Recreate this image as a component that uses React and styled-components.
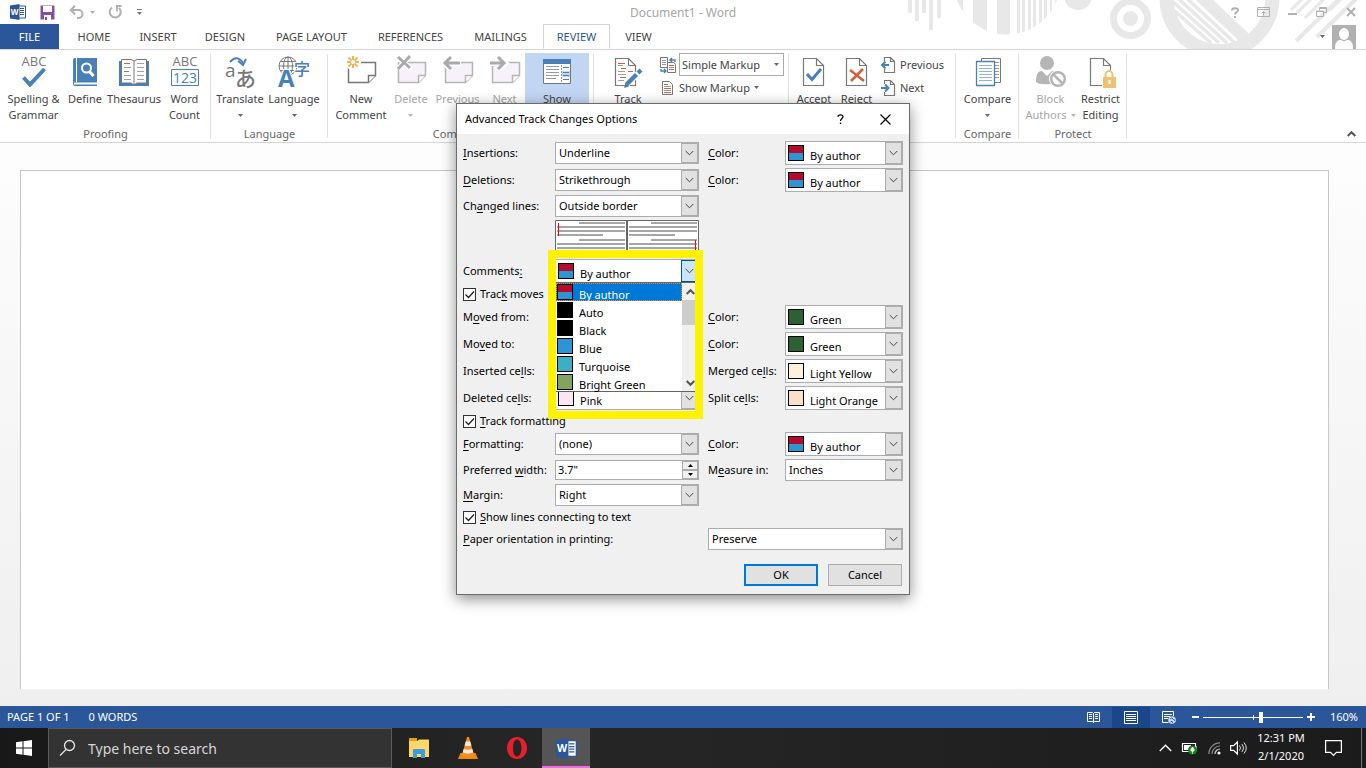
import React from 'react';
import styled, { createGlobalStyle, css } from 'styled-components';

const Global = createGlobalStyle`
  *, *::before, *::after { box-sizing: border-box; }
  body { margin: 0; font-family: "Noto Sans", "Open Sans", sans-serif; font-size: 11px; line-height: 16px; color: #444; }
  button, input, select { font: inherit; color: inherit; margin: 0; padding: 0; border: 0; background: none; border-radius: 0; }
  ul { list-style: none; margin: 0; padding: 0; }
  svg { display: block; flex: none; }
`;

const BLUE = '#4a80b8';
const GREY = '#777';

const Screen = styled.div`
  position: relative;
  min-height: 100vh;
  display: flex;
  flex-direction: column;
  background: #fff;
`;

/* ---------- title bar and tabs ---------- */

const Header = styled.header`
  position: relative;
  height: 50px;
  border-bottom: 1px solid #d4d4d4;
  display: flex;
  flex-direction: column;
`;
const Decor = styled.svg`
  position: absolute;
  right: 0;
  top: 0;
`;
const TitleBar = styled.div`
  position: relative;
  height: 25px;
  display: flex;
  align-items: center;
`;
const QuickAccess = styled.div`
  width: 154px;
  padding-left: 9px;
  display: flex;
  align-items: center;
`;
const IconButton = styled.button`
  width: ${p => p.$w}px;
  height: ${p => p.$h || 22}px;
  display: grid;
  place-items: center;
`;
const DocTitle = styled.h1`
  flex: 1;
  margin: 0;
  padding-top: 2px;
  text-align: center;
  font-size: 12px;
  font-weight: 400;
  color: #a6a6a6;
`;
const WindowButtons = styled.div`
  width: 154px;
  display: flex;
  justify-content: flex-end;
`;
const TabBar = styled.nav`
  position: relative;
  height: 25px;
  display: flex;
`;
const Tab = styled.a`
  width: ${p => p.$w}px;
  height: 25px;
  padding-top: 1px;
  line-height: 24px;
  text-align: center;
  text-decoration: none;
  color: ${p => (p.$active ? '#2b579a' : '#444')};
  ${p => p.$file && css`background: #2b579a; color: #fff; margin-right: 3px;`}
  ${p => p.$active && css`background: #fff; border: 1px solid #d4d4d4; border-bottom-color: #fff; padding-top: 0;`}
`;
const Account = styled.div`
  margin-left: auto;
  padding-right: 10px;
  display: flex;
  align-items: center;
`;

/* ---------- ribbon ---------- */

const Ribbon = styled.div`
  height: 93px;
  display: flex;
  border-bottom: 1px solid #d4d4d4;
`;
const Group = styled.section`
  position: relative;
  min-width: ${p => p.$w}px;
  padding: 3px ${p => p.$pad}px 0;
  display: flex;
  flex-direction: column;
  &::after {
    content: '';
    position: absolute;
    right: 0;
    top: 4px;
    bottom: 4px;
    width: 1px;
    background: #e1e1e1;
  }
`;
const GroupBody = styled.div`
  height: 73px;
  display: flex;
`;
const GroupName = styled.h2`
  margin: 0;
  font-size: 11px;
  font-weight: 400;
  line-height: 16px;
  text-align: center;
  color: #666;
`;
const Big = styled.button`
  width: ${p => p.$w}px;
  padding-top: 3px;
  display: flex;
  flex-direction: column;
  align-items: center;
  white-space: nowrap;
  color: ${p => (p.disabled ? '#a6a6a6' : '#444')};
  background: ${p => (p.$on ? '#c2d5f2' : 'none')};
`;
const BigLabel = styled.span`
  padding-top: 3px;
  display: flex;
  flex-direction: column;
  align-items: center;
`;
const Line = styled.span`
  height: 16px;
  display: flex;
  align-items: center;
  gap: 4px;
`;
const SmallColumn = styled.div`
  padding-left: ${p => p.$pad}px;
  display: flex;
  flex-direction: column;
`;
const SmallRow = styled.div`
  height: 23px;
  display: flex;
  align-items: center;
  gap: 3px;
`;
const SmallButton = styled.button`
  display: flex;
  align-items: center;
  gap: 4px;
`;
const MarkupBox = styled.span`
  position: relative;
  width: 105px;
  height: 23px;
  border: 1px solid #ababab;
  display: flex;
  align-items: center;
`;
const MarkupSelect = styled.select`
  appearance: none;
  width: 100%;
  height: 100%;
  padding-left: 2px;
`;
const MarkupCaret = styled.span`
  position: absolute;
  right: 4px;
  pointer-events: none;
`;
const Collapse = styled.div`
  margin-left: auto;
  padding: 0 8px 1px 0;
  display: flex;
  align-items: flex-end;
`;

/* ---------- document ---------- */

const Workspace = styled.main`
  flex: 1;
  min-height: 400px;
  display: flex;
  padding: 27px 37px 17px 20px;
  background: linear-gradient(#fdfdfd, #efefef);
`;
const Page = styled.div`
  flex: 1;
  background: #fff;
  border: 1px solid #c6c6c6;
  border-bottom: 0;
`;

/* ---------- status bar ---------- */

const StatusBar = styled.footer`
  height: 22px;
  padding: 0 8px 0 7px;
  display: flex;
  align-items: center;
  background: #2b579a;
  color: #fff;
`;
const StatusText = styled.span`
  margin-right: 19px;
`;
const StatusRight = styled.div`
  margin-left: auto;
  display: flex;
  align-items: center;
`;
const ViewButton = styled.button`
  width: 38px;
  height: 21px;
  display: grid;
  place-items: center;
  background: ${p => (p.$on ? '#19478a' : 'none')};
`;
const ZoomSlider = styled.input`
  appearance: none;
  width: 100px;
  height: 11px;
  background:
    linear-gradient(#fff, #fff) center / 1px 5px no-repeat,
    linear-gradient(#fff, #fff) center / 100% 1px no-repeat;
  &::-webkit-slider-thumb { appearance: none; width: 4px; height: 11px; background: #fff; }
`;
const ZoomLevel = styled.span`
  width: 40px;
  text-align: right;
`;

/* ---------- taskbar ---------- */

const Taskbar = styled.footer`
  height: 40px;
  display: flex;
  align-items: stretch;
  background: linear-gradient(90deg, #181818, #262626 40%, #232323 60%, #1b1b1b);
  color: #fff;
`;
const TaskButton = styled.button`
  width: ${p => p.$w}px;
  display: grid;
  place-items: center;
  ${p => p.$on && css`background: #555; border-bottom: 2px solid #f06be0; padding-top: 2px;`}
`;
const Search = styled.label`
  width: 344px;
  margin-right: 2px;
  padding-left: 10px;
  display: flex;
  align-items: center;
  gap: 12px;
  background: #333;
  border: 1px solid #5a5a5a;
`;
const SearchInput = styled.input`
  flex: 1;
  min-width: 0;
  outline: 0;
  padding-top: 1px;
  font-size: 14px;
  &::placeholder { color: #d6d6d6; opacity: 1; }
`;
const Apps = styled.div`
  display: flex;
`;
const Tray = styled.div`
  margin-left: auto;
  display: flex;
`;
const Clock = styled.time`
  width: 62px;
  padding-top: 1px;
  line-height: 18px;
  text-align: center;
`;
const ShowDesktop = styled.div`
  width: 5px;
  border-left: 1px solid #777;
`;

/* ---------- dialog ---------- */

const Overlay = styled.div`
  position: absolute;
  inset: 0;
  padding-top: 103px;
  display: flex;
  justify-content: center;
  align-items: flex-start;
`;
const Dialog = styled.section`
  width: 454px;
  background: #f0f0f0;
  border: 1px solid #6b6b6b;
  box-shadow: 0 4px 14px rgba(0, 0, 0, 0.45);
  color: #000;
`;
const DialogTitle = styled.div`
  height: 30px;
  padding: 0 1px 0 8px;
  display: flex;
  align-items: center;
  background: #fff;
`;
const DialogName = styled.h2`
  flex: 1;
  margin: 0;
  font-size: 11px;
  font-weight: 400;
`;
const Form = styled.form`
  padding: 6px 6px 8px;
  display: flex;
  flex-direction: column;
  gap: 1px;
`;
const Row = styled.div`
  min-height: ${p => p.$h || 26}px;
  display: grid;
  grid-template-columns: ${p => (p.$wide ? '245px 1fr' : '92px 144px 86px 118px')};
  align-items: center;
`;
const Label = styled.label`
  padding-left: ${p => (p.$second ? 9 : 0)}px;
  white-space: nowrap;
  u { text-underline-offset: 2px; }
`;
const Combo = styled.div`
  position: relative;
  height: ${p => (p.$swatch ? 24 : 22)}px;
  border: 1px solid #ababb0;
  background: #fff;
`;
const Select = styled.select`
  appearance: none;
  display: block;
  width: 100%;
  height: 100%;
  outline: 0;
  padding-left: ${p => (p.$swatch ? 24 : 3)}px;
  padding-top: ${p => (p.$swatch ? 5 : 0)}px;
`;
const Arrow = styled.span`
  position: absolute;
  top: 0;
  right: 0;
  bottom: 0;
  width: 17px;
  display: grid;
  place-items: center;
  pointer-events: none;
  background: ${p => (p.$on ? '#cce4f7' : '#e1e1e1')};
  border: 1px solid ${p => (p.$on ? '#005499' : '#adadad')};
`;
const Swatch = styled.span`
  flex: none;
  width: 16px;
  height: 16px;
  border: 1px solid #000;
  background: ${p => p.$fill};
`;
const ComboSwatch = styled(Swatch)`
  position: absolute;
  left: 2px;
  top: 3px;
  pointer-events: none;
`;
const Anchor = styled.div`
  position: relative;
`;
const Popup = styled.div`
  position: absolute;
  z-index: 2;
  top: 23px;
  left: 0;
  width: 145px;
  display: flex;
  background: #fff;
  border: 1px solid #646464;
`;
const List = styled.ul`
  flex: 1;
`;
const Item = styled.li`
  height: 18px;
  padding-left: 1px;
  display: flex;
  align-items: center;
  gap: 6px;
  ${p => p.$on && css`background: #0078d7; color: #fff; outline: 1px dotted #ff8728; outline-offset: -1px;`}
`;
const ItemText = styled.span`
  padding-top: 6px;
`;
const Scroll = styled.div`
  width: 17px;
  display: flex;
  flex-direction: column;
  background: #f0f0f0;
`;
const ScrollButton = styled.button`
  height: 17px;
  display: grid;
  place-items: center;
`;
const Track = styled.div`
  flex: 1;
`;
const Thumb = styled.div`
  height: 25px;
  background: #cdcdcd;
`;
const Highlight = styled.div`
  position: absolute;
  z-index: 3;
  left: -7px;
  top: -9px;
  width: 155px;
  height: 169px;
  border: 8px solid #fff200;
  pointer-events: none;
`;
const CheckRow = styled.div`
  height: 18px;
  display: flex;
  align-items: center;
  gap: 4px;
`;
const CheckMark = styled.span`
  display: grid;
  > * { grid-area: 1 / 1; }
  > svg { pointer-events: none; }
`;
const Check = styled.input`
  appearance: none;
  width: 13px;
  height: 13px;
  border: 1px solid #333;
  background: #fff;
`;
const Spinner = styled.div`
  height: 20px;
  display: flex;
  background: #fff;
  border: 1px solid #ababb0;
`;
const SpinInput = styled.input`
  flex: 1;
  min-width: 0;
  padding-left: 2px;
  outline: 0;
`;
const SpinButtons = styled.div`
  width: 16px;
  display: flex;
  flex-direction: column;
`;
const SpinButton = styled.button`
  flex: 1;
  display: grid;
  place-items: center;
  background: #f0f0f0;
  border: 1px solid #ababab;
`;
const Actions = styled.div`
  padding: 12px 1px 0 0;
  display: flex;
  justify-content: flex-end;
  gap: 10px;
`;
const PushButton = styled.button`
  width: 74px;
  height: 22px;
  background: #e1e1e1;
  border: ${p => (p.$primary ? '2px solid #0078d7' : '1px solid #adadad')};
`;

/* ---------- drawings ---------- */

const Svg = ({ w = 32, h = 32, children }) => (
  <svg width={w} height={h} viewBox={`0 0 ${w} ${h}`} fill="none" overflow="visible" aria-hidden="true">{children}</svg>
);
const Caret = ({ c = '#666' }) => <Svg w={5} h={3}><path d="M0 0h5L2.500 3z" fill={c} /></Svg>;
const Chevron = ({ up, bold }) => (
  <Svg w={9} h={6}>
    <path d={up ? 'M.7 5 4.500 1.200 8.300 5' : 'M.7 1 4.500 4.800 8.300 1'} stroke={bold ? '#555' : '#444'} strokeWidth={bold ? 2 : 1} />
  </Svg>
);

const WordLogo = ({ s }) => (
  <svg width={s} height={s} viewBox="0 0 16 16" aria-hidden="true">
    <path d="M8 2h7.500v12H8z" fill="#fff" stroke="#2b579a" />
    <path d="M10 4.500h4M10 6.500h4M10 8.500h4M10 10.500h4" stroke="#2b579a" />
    <path d="M0 1.500 9.500 0v16L0 14.500z" fill="#2b579a" />
    <text x="4.700" y="11" textAnchor="middle" fontSize="8" fontWeight="700" fontFamily="Open Sans" fill="#fff">W</text>
  </svg>
);
const SaveIcon = () => (
  <Svg w={15} h={15}>
    <path d="M.5.5h14v14H.5z" fill="#8250a4" />
    <path d="M3 1h9v6H3z" fill="#fff" /><path d="M4 10h7v5H4z" fill="#fff" /><path d="M5 12h2v3H5z" fill="#8250a4" />
  </Svg>
);
const UndoIcon = () => (
  <Svg w={16} h={14}>
    <path d="M2 5h7.500a4 4 0 0 1 0 8H8" stroke="#b0b0b0" strokeWidth="2" /><path d="M6 .8 1.800 5 6 9.200" stroke="#b0b0b0" strokeWidth="2" />
  </Svg>
);
const RedoIcon = () => (
  <Svg w={15} h={15}>
    <path d="M4 2.500A5.500 5.500 0 1 0 11 3" stroke="#b0b0b0" strokeWidth="2" /><path d="M8 1h5.500M9 1v5.500" stroke="#b0b0b0" strokeWidth="1.800" />
  </Svg>
);
const CustomizeIcon = () => <Svg w={5} h={7}><path d="M0 .5h5" stroke="#777" /><path d="M0 3h5L2.500 6z" fill="#777" /></Svg>;

const HeaderArt = () => (
  <Decor width="466" height="49" viewBox="0 0 466 49" aria-hidden="true">
    <defs>
      <clipPath id="disc"><circle cx="107" cy="-19" r="53.500" /></clipPath>
      <clipPath id="ringHole"><circle cx="319.500" cy="-2" r="47" /></clipPath>
    </defs>
    <g fill="#e8e8e8">
      <path d="M8 0h4v13H8zM15 0h4v21h-4zM22 0h4v13h-4zM29 0h4v30h-4zM37 0h4v18h-4z" />
      <path clipPath="url(#disc)" d="M52 0h11v36H52zM73 0h14v36H73zM97 0h13v36H97zM117 0h3v36h-3zM122 0h3v36h-3zM128 0h3v36h-3zM133 0h3v36h-3zM139 0h3v36h-3zM144 0h3v36h-3zM150 0h2v36h-2zM155 0h2v36h-2z" />
      <circle cx="178" cy="-4" r="14" />
      <circle cx="230.500" cy="18.500" r="7.500" />
    </g>
    <g stroke="#e8e8e8" fill="none">
      <circle cx="230.500" cy="18.500" r="17" strokeWidth="7" />
      <circle cx="319.500" cy="-2" r="53" strokeWidth="14" />
      <g clipPath="url(#ringHole)">
        <path d="M296-8 350 43" strokeWidth="12" />
        <path d="M280-8 335 43M271-8 327 43M262-8 319 43M253-8 311 43" strokeWidth="3.500" />
      </g>
      <path d="M396 41 441-3M417 37 458-3" strokeWidth="4" />
      <path d="M405 18 426-3M391 10 404-3M397 13 413-3M430 10 443-3" strokeWidth="3" />
    </g>
  </Decor>
);
const HelpIcon = () => (
  <Svg w={8} h={11}><path d="M1 3.500C1 .5 7 .5 7 3.200 7 5 4 5 4 7.500M4 9v2" stroke="#b0b0b0" strokeWidth="2" /></Svg>
);
const RibbonDisplayIcon = () => (
  <Svg w={13} h={10}><path d="M.5.5h12v9H.5zM.5 2.500h12M6.500 8.500v-4M4.500 6.500l2-2 2 2" stroke="#b0b0b0" /></Svg>
);
const MinIcon = () => <Svg w={9} h={10}><path d="M0 7h9" stroke="#b0b0b0" strokeWidth="2" /></Svg>;
const RestoreIcon = () => <Svg w={11} h={10}><path d="M3.500 3V.5h7v5H8M.5 4h7v5.500h-7zM.5 4.500h7M3.500 1.500h7" stroke="#b0b0b0" /></Svg>;
const CloseIcon = () => <Svg w={10} h={10}><path d="m1 1 8 8M9 1 1 9" stroke="#b0b0b0" strokeWidth="2" /></Svg>;
const Avatar = () => (
  <Svg w={24} h={24}>
    <path d="M0 0h24v24H0z" fill="#b1b1b1" /><ellipse cx="12" cy="9" rx="5" ry="6" fill="#fff" />
    <path d="M3 24c0-7 2-9 6-9l3 1.500L15 15c4 0 6 2 6 9z" fill="#fff" />
  </Svg>
);

const Abc = () => <text x="16" y="10" textAnchor="middle" fontSize="13" fontFamily="Open Sans" fontWeight="500" fill={GREY}>ABC</text>;
const SpellingIcon = () => <Svg><Abc /><path d="m5.500 21.500 6.500 7L26.500 13" stroke={BLUE} strokeWidth="4" /></Svg>;
const DefineIcon = () => (
  <Svg>
    <path d="M4 4q0-2 2-2h22v28H6q-2 0-2-2z" fill={BLUE} /><path d="M7.500 2v24" stroke="#fff" /><path d="M5 26.500h23v2H5z" fill="#fff" />
    <circle cx="17.500" cy="12" r="4.500" stroke="#fff" strokeWidth="2" /><path d="m20.500 15.500 4 4.500" stroke="#fff" strokeWidth="3" />
  </Svg>
);
const ThesaurusIcon = () => (
  <Svg>
    <path d="M1 5h30v25H1z" fill={BLUE} />
    <path d="M3.500 3.500H13l3 1.500 3-1.500h9.500v23.500H19l-3 2-3-2H3.500z" fill="#fff" stroke={GREY} /><path d="M16 5v24" stroke={GREY} />
    <path d="M6 7.500h6M6 15.500h5" stroke="#d2603c" />
    <path d="M6 11.500h7M6 19.500h7M6 23.500h7M19 7.500h7M19 11.500h7M19 15.500h7M19 19.500h7M19 23.500h7" stroke="#a0a0a0" />
  </Svg>
);
const WordCountIcon = () => (
  <Svg>
    <Abc /><path d="M2.500 13.500h27v16h-27z" stroke={BLUE} />
    <text x="16" y="27" textAnchor="middle" fontSize="14" fontFamily="Open Sans" fill={BLUE}>123</text>
  </Svg>
);
const TranslateIcon = () => (
  <Svg>
    <text x="1" y="21" fontSize="19" fontFamily="Open Sans" fill={GREY}>a</text>
    <text x="11" y="30" fontSize="21" fontFamily="Noto Sans CJK JP" fontWeight="500" fill={GREY}>あ</text>
    <path d="M6 6Q13-2 19 7" stroke={BLUE} strokeWidth="2" /><path d="m14 5 5 4 3-6" stroke={BLUE} strokeWidth="2" />
  </Svg>
);
const LanguageIcon = () => (
  <Svg>
    <circle cx="10" cy="10" r="9" stroke={GREY} /><ellipse cx="10" cy="10" rx="4.500" ry="9" stroke={GREY} /><path d="M10 1v18M1 10h18M2.500 5.500h15M2.500 14.500h15" stroke={GREY} />
    <text x="0" y="31" fontSize="24" fontFamily="Open Sans" fontWeight="700" fill={BLUE} stroke="#fff" strokeWidth="2" paintOrder="stroke">A</text>
    <text x="16" y="19" fontSize="16" fontFamily="Noto Sans CJK JP" fontWeight="500" fill={BLUE} stroke="#fff" strokeWidth="2" paintOrder="stroke">字</text>
  </Svg>
);
const Note = ({ off }) => (
  <>
    <path d="M3.500 6.500h27v13l-7 7h-20z" fill={off ? '#f7f2f9' : '#fff'} stroke={off ? '#b5b5b5' : GREY} strokeWidth="1.500" />
    <path d="M23.500 26.500v-7h7" fill="#fff" stroke={off ? '#b5b5b5' : GREY} strokeWidth="1.500" />
  </>
);
const NewCommentIcon = () => (
  <Svg>
    <Note /><circle cx="8" cy="6" r="8" fill="#fff" />
    <path d="M8 0v12M2 6h12M3.500 1.500l9 9M12.500 1.500l-9 9" stroke="#ecb75c" strokeWidth="2" /><circle cx="8" cy="6" r="2" fill="#fff" />
  </Svg>
);
const DeleteIcon = () => <Svg><Note off /><path d="m2 1 14 12M15 0 3 13" stroke="#fff" strokeWidth="5" /><path d="m3 1 12 11M15 0 3 13" stroke="#aaa" strokeWidth="3" /></Svg>;
const PrevIcon = () => <Svg><Note off /><path d="M3 7h16M9 0 2.500 7 9 13" stroke="#fff" strokeWidth="6" /><path d="M4 7h14M9 1 3 7l6 6" stroke="#aaa" strokeWidth="3" /></Svg>;
const NextIcon = () => <Svg><Note off /><path d="M0 7h17M10 0l6.500 7L10 13" stroke="#fff" strokeWidth="6" /><path d="M1 7h14M9 1l6 6-6 6" stroke="#aaa" strokeWidth="3" /></Svg>;
const ShowIcon = () => (
  <Svg>
    <path d="M2.500 3.500h27v24h-27z" fill="#fff" stroke={GREY} /><path d="M2 3h28v5H2z" fill={BLUE} /><path d="M21 15h8v6h-8z" fill="#c2d5f2" />
    <path d="M5 10.500h13M5 13.500h13M5 16.500h13M5 19.500h13M5 22.500h10" stroke="#999" /><path d="M20.500 9v18" stroke="#999" strokeDasharray="2 1" />
    <path d="M22 11.500h6M22 16.500h6M22 19.500h6M22 23.500h6" stroke={BLUE} />
  </Svg>
);
const Sheet = () => <path d="M5.500 2.500h13l7 7v20h-20zM18.500 2.500v7h7" fill="#fff" stroke={GREY} strokeWidth="1.200" />;
const TrackIcon = () => (
  <Svg>
    <path d="M3.500 2.500h13l7 7v20h-20zM16.500 2.500v7h7" fill="#fff" stroke={GREY} strokeWidth="1.200" />
    <path d="M6 9.500h5M6 15.500h7M6 18.500h8M6 24.500h6" stroke="#a0a0a0" /><path d="M6 7.500h7M9 12.500h5M16 15.500h5M8 21.500h6" stroke="#d2603c" />
    <path d="M29 15 15 28" stroke="#fff" strokeWidth="6" /><path d="m24.500 18.500-10 10" stroke={BLUE} strokeWidth="4.500" />
    <path d="m26 17 3-3" stroke={BLUE} strokeWidth="4" /><path d="m12 32 1.500-5 3.500 3.500z" fill={BLUE} />
  </Svg>
);
const AcceptIcon = () => <Svg><Sheet /><path d="m9 18 5 5.500L23 13" stroke={BLUE} strokeWidth="3" /></Svg>;
const RejectIcon = () => <Svg><Sheet /><path d="m9 14 14 11M22 13 10 25" stroke="#d2603c" strokeWidth="2.500" /></Svg>;
const CompareIcon = () => (
  <Svg>
    <path d="M9.500 2.500h19v24h-19z" fill="#fff" stroke={GREY} /><path d="M23 6.500h4M23 9.500h4M23 12.500h4M23 15.500h4M23 18.500h4M23 21.500h4" stroke="#999" />
    <path d="M4.500 5.500h18v24h-18z" fill="#fff" stroke={BLUE} strokeWidth="1.300" /><path d="M7 9.500h13M7 12.500h13M7 15.500h13M7 18.500h13M7 21.500h13M7 24.500h13" stroke="#8fb4d8" />
  </Svg>
);
const BlockIcon = () => (
  <Svg>
    <circle cx="12" cy="7" r="7" fill="#b5b5b5" /><path d="M1 26c0-8 2-11 6-11l5 5 5-5q4 0 5 4l-6 9q-12 1-15-2z" fill="#b5b5b5" />
    <circle cx="23" cy="23" r="9" fill="#fff" /><circle cx="23" cy="23" r="6.800" stroke="#b5b5b5" strokeWidth="2.500" /><path d="m18 18 10 10" stroke="#b5b5b5" strokeWidth="2.500" />
  </Svg>
);
const RestrictIcon = () => (
  <Svg>
    <Sheet /><path d="M17 14h15v18H17z" fill="#fff" />
    <path d="M20.500 22v-3a3.500 4 0 0 1 7 0v3" stroke="#ecc173" strokeWidth="2" /><path d="M18 21h13v11H18z" fill="#ecc173" /><path d="M24.500 24v4" stroke="#fff" strokeWidth="2" />
  </Svg>
);
const MarkupIcon = () => (
  <Svg w={16} h={16}>
    <path d="M.5.5h7v10h-7zM7.500 5.500H14l1.500 2v8h-8z" fill="#fff" stroke={GREY} /><path d="M2 3.500h4M2 5.500h4M2 7.500h4" stroke="#999" />
    <path d="M9 8.500h5M9 12.500h5" stroke="#d2603c" /><path d="M9 10.500h5" stroke="#999" />
    <path d="M15 5V3h-5M12 1l-2 2 2 2M1 12v2h5M4 12l2 2-2 2" stroke={BLUE} strokeWidth="1.400" />
  </Svg>
);
const ShowMarkupIcon = () => (
  <Svg w={16} h={16}>
    <path d="M2.500 1.500h7l3 3v10h-10z" fill="#fff" stroke={GREY} /><path d="M4 4.500h4M4 8.500h7M4 12.500h7" stroke="#d2603c" /><path d="M4 6.500h7M4 10.500h7" stroke="#999" />
  </Svg>
);
const PaneIcon = () => <Svg w={16} h={16}><path d="M0 0h16v3H0z" fill="#2b579a" /><path d="M.5.5h15v15H.5z" stroke={GREY} /></Svg>;
const StepIcon = ({ next }) => (
  <Svg w={16} h={16}>
    <path d="M3.500 4V.5h6l4 4v11h-10V12M9.500.5v4h4" stroke={GREY} strokeWidth="1.200" />
    <path d={next ? 'M0 8h7M4 4.500 7.500 8 4 11.500' : 'M8 8H1M4.500 4.500 1 8l3.500 3.500'} stroke={BLUE} strokeWidth="2" />
  </Svg>
);

const ReadIcon = () => (
  <Svg w={13} h={12}>
    <path d="M.5 1.500h5l1 1 1-1h5v9h-5l-1 1-1-1h-5zM6.500 2v10M2 3.500h3M2 5.500h3M2 7.500h3M8 3.500h3M8 5.500h3M8 7.500h3" stroke="#fff" />
  </Svg>
);
const PrintIcon = () => <Svg w={14} h={13}><path d="M.5.5h13v12H.5zM2 3.500h10M2 5.500h10M2 7.500h10M2 9.500h10" stroke="#fff" /></Svg>;
const WebIcon = () => (
  <Svg w={14} h={13}>
    <path d="M11.500 5V.5H.5v11h6M2 3.500h8M2 5.500h6M2 7.500h4" stroke="#fff" /><circle cx="10" cy="9" r="3.800" fill="#cfdcf0" /><path d="M8 8q2-2 3 0t2 1M8.500 11q2-2 2 1" stroke="#2b579a" />
  </Svg>
);
const MinusIcon = () => <Svg w={7} h={8}><path d="M0 4h7" stroke="#fff" strokeWidth="2" /></Svg>;
const PlusIcon = () => <Svg w={8} h={8}><path d="M0 4h8M4 0v8" stroke="#fff" strokeWidth="2" /></Svg>;

const StartIcon = () => <Svg w={16} h={16}><path d="M0 2.300 6.500 1.300V7.500H0zM7.500 1.200 16 0v7.500H7.500zM0 8.500h6.500v6.200L0 13.700zM7.500 8.500H16V16l-8.500-1.200z" fill="#fff" /></Svg>;
const SearchIcon = () => <Svg w={17} h={18}><circle cx="10.500" cy="6.500" r="5" stroke="#e6e6e6" strokeWidth="1.300" /><path d="M7 10.500 1 16.500" stroke="#e6e6e6" strokeWidth="1.300" /></Svg>;
const FolderIcon = () => (
  <Svg w={22} h={20}>
    <path d="M1 0h8v4H1z" fill="#e0a21b" /><path d="M1 3h8l2-1.500h10V19H1z" fill="#fcd668" /><path d="M5 20v-8q0-1 1-1h10q1 0 1 1v8h-4v-4H9v4z" fill="#3a9be0" />
  </Svg>
);
const VlcIcon = () => (
  <Svg w={20} h={24}>
    <path d="M2.500 17h15L20 23H0z" fill="#f08a0c" /><path d="M9 1h2l5 18q-6 3-12 0z" fill="#f39019" />
    <path d="m7.800 5.500-1.200 4q3.400 1 6.800 0l-1.200-4zM5.700 13l-1 3.500q5.300 2 10.600 0l-1-3.500q-4.300 1.500-8.600 0z" fill="#e9e9e9" />
  </Svg>
);
const OperaIcon = () => <Svg w={22} h={24}><path fillRule="evenodd" d="M11 1c6 0 10 5 10 11s-4 11-10 11S1 18 1 12 5 1 11 1zm0 2.500C8 3.500 7 8 7 12s1 8.500 4 8.500 4.500-4.500 4.500-8.500S14 3.500 11 3.500z" fill="#e8202e" /></Svg>;
const BatteryIcon = () => (
  <Svg w={16} h={14}>
    <path d="M.5 2.500h13v8H.5zM14 5v3" stroke="#fff" strokeWidth="1.200" /><path d="M2 4h7v5H2z" fill="#fff" />
    <circle cx="10.500" cy="9" r="4.500" fill="#13881b" /><path d="M10.500 6 8.500 9l2 2 2-2zM10.500 9v4" fill="#fff" stroke="#fff" strokeWidth=".6" />
  </Svg>
);
const WifiIcon = () => (
  <Svg w={13} h={13}>
    <path d="M.8 12A11.200 11.200 0 0 1 12 .8M4 12a8 8 0 0 1 8-8" stroke="#8a8a8a" strokeWidth="1.200" /><path d="M7 12a5 5 0 0 1 5-5" stroke="#ccc" strokeWidth="1.200" /><circle cx="11" cy="11" r="1.600" fill="#fff" />
  </Svg>
);
const SpeakerIcon = () => (
  <Svg w={17} h={14}>
    <path d="M.6 4.600h3L7.400 1v12L3.600 9.400h-3z" stroke="#fff" strokeWidth="1.200" /><path d="M9.500 4.500q2 2.500 0 5M11.800 3q3.200 4 0 8M14 1.500q4.500 5.500 0 11" stroke="#e0e0e0" />
  </Svg>
);
const NoticeIcon = () => <Svg w={17} h={17}><path d="M.6.6h15.800v11.800h-5L8.500 15.500l-3-3.100H.6z" stroke="#fff" strokeWidth="1.200" /></Svg>;

const PREVIEW = [[24, 70], [2, 70], [2, 70], [2, 48], [24, 70], [2, 70], [2, 70], [2, 48]];
const PREVIEW_Y = [3, 7, 11, 15, 20, 24, 28, 32];
const PreviewArt = () => (
  <Svg w={144} h={37}>
    <path d="M.5.5h143v36H.5z" fill="#fff" stroke="#666" />
    <path d="M72 0v37" stroke="#666" strokeWidth="2" />
    {[0, 72].map(dx => PREVIEW.map(([a, b], i) => (
      <path key={`${dx}-${i}`} d={`M${a + dx} ${PREVIEW_Y[i]}H${b + dx}`} stroke="#a6a6a6" strokeWidth="2" />
    )))}
    <path d="M3.500 3v13M140.500 20v14" stroke="#f00" />
  </Svg>
);

/* ---------- composed parts ---------- */

const AUTHOR = 'linear-gradient(#b30b2f 50%, #2e95d3 50%)';

const BigButton = ({ w, icon, lines, caret, off, on }) => (
  <Big $w={w} $on={on} disabled={off} type="button">
    {icon}
    <BigLabel>
      {lines.map((t, i) => <Line key={t}>{t}{caret && i === 1 && <Caret c={off ? '#b5b5b5' : '#666'} />}</Line>)}
      {caret && lines.length === 1 && <Line><Caret c={off ? '#b5b5b5' : '#666'} /></Line>}
    </BigLabel>
  </Big>
);

const ComboBox = ({ id, value, swatch, open }) => (
  <Combo $swatch={!!swatch}>
    <Select id={id} $swatch={!!swatch} defaultValue={value}><option>{value}</option></Select>
    {swatch && <ComboSwatch $fill={swatch} />}
    <Arrow $on={open}><Chevron /></Arrow>
  </Combo>
);

const CheckField = ({ id, children }) => (
  <CheckRow>
    <CheckMark>
      <Check type="checkbox" id={id} defaultChecked />
      <Svg w={13} h={13}><path d="m2.500 6.500 3 3 5.500-6" stroke="#222" strokeWidth="1.300" /></Svg>
    </CheckMark>
    <Label htmlFor={id}>{children}</Label>
  </CheckRow>
);

const COLORS = [
  ['By author', AUTHOR], ['Auto', '#000'], ['Black', '#000'], ['Blue', '#2e95d3'],
  ['Turquoise', '#3dafc2'], ['Bright Green', '#84a35c'],
];

const TABS = [['HOME', 64], ['INSERT', 64], ['DESIGN', 70], ['PAGE LAYOUT', 103], ['REFERENCES', 95], ['MAILINGS', 85], ['REVIEW', 67], ['VIEW', 57]];

function OptionsDialog() {
  return (
    <Overlay>
      <Dialog role="dialog" aria-labelledby="dialog-name">
        <DialogTitle>
          <DialogName id="dialog-name">Advanced Track Changes Options</DialogName>
          <IconButton $w={45} type="button" aria-label="Help">
            <Svg w={7} h={10}><path d="M1 2.800C1 .2 6 .2 6 2.800 6 4.500 3.500 4.500 3.500 7M3.500 8.500V10" stroke="#000" strokeWidth="1.300" /></Svg>
          </IconButton>
          <IconButton $w={45} type="button" aria-label="Close">
            <Svg w={11} h={11}><path d="m.5.5 10 10M10.500.5l-10 10" stroke="#000" strokeWidth="1.200" /></Svg>
          </IconButton>
        </DialogTitle>
        <Form onSubmit={e => e.preventDefault()}>
          <Row>
            <Label htmlFor="ins"><u>I</u>nsertions:</Label><ComboBox id="ins" value="Underline" />
            <Label $second htmlFor="insColor"><u>C</u>olor:</Label><ComboBox id="insColor" value="By author" swatch={AUTHOR} />
          </Row>
          <Row>
            <Label htmlFor="del"><u>D</u>eletions:</Label><ComboBox id="del" value="Strikethrough" />
            <Label $second htmlFor="delColor"><u>C</u>olor:</Label><ComboBox id="delColor" value="By author" swatch={AUTHOR} />
          </Row>
          <Row $h={24}><Label htmlFor="chg">Ch<u>a</u>nged lines:</Label><ComboBox id="chg" value="Outside border" /></Row>
          <Row $h={38}><span /><PreviewArt /></Row>
          <Row>
            <Label htmlFor="com">Comments<u>:</u></Label>
            <Anchor>
              <ComboBox id="com" value="By author" swatch={AUTHOR} open />
              <Popup>
                <List role="listbox" aria-label="Comments color">
                  {COLORS.map(([name, fill], i) => (
                    <Item key={name} role="option" aria-selected={i === 0} $on={i === 0}>
                      <Swatch $fill={fill} /><ItemText>{name}</ItemText>
                    </Item>
                  ))}
                </List>
                <Scroll>
                  <ScrollButton type="button" aria-label="Scroll up"><Chevron up bold /></ScrollButton>
                  <Track><Thumb /></Track>
                  <ScrollButton type="button" aria-label="Scroll down"><Chevron bold /></ScrollButton>
                </Scroll>
              </Popup>
              <Highlight />
            </Anchor>
          </Row>
          <CheckField id="moves">Trac<u>k</u> moves</CheckField>
          <Row>
            <Label htmlFor="mf">M<u>o</u>ved from:</Label><ComboBox id="mf" value="Double strikethrough" />
            <Label $second htmlFor="mfColor"><u>C</u>olor:</Label><ComboBox id="mfColor" value="Green" swatch="#2d6033" />
          </Row>
          <Row>
            <Label htmlFor="mt">Mo<u>v</u>ed to:</Label><ComboBox id="mt" value="Double underline" />
            <Label $second htmlFor="mtColor"><u>C</u>olor:</Label><ComboBox id="mtColor" value="Green" swatch="#2d6033" />
          </Row>
          <Row>
            <Label htmlFor="ic">Inserted ce<u>l</u>ls:</Label><ComboBox id="ic" value="Light Blue" swatch="#d5e8f5" />
            <Label $second htmlFor="mc">Merged ce<u>l</u>ls:</Label><ComboBox id="mc" value="Light Yellow" swatch="#fdf1dc" />
          </Row>
          <Row>
            <Label htmlFor="dc">Deleted ce<u>l</u>ls:</Label><ComboBox id="dc" value="Pink" swatch="#fbe5f3" />
            <Label $second htmlFor="sc">Split ce<u>l</u>ls:</Label><ComboBox id="sc" value="Light Orange" swatch="#fbdfcd" />
          </Row>
          <CheckField id="fmtOn"><u>T</u>rack formatting</CheckField>
          <Row>
            <Label htmlFor="fmt"><u>F</u>ormatting:</Label><ComboBox id="fmt" value="(none)" />
            <Label $second htmlFor="fmtColor"><u>C</u>olor:</Label><ComboBox id="fmtColor" value="By author" swatch={AUTHOR} />
          </Row>
          <Row $h={24}>
            <Label htmlFor="pw">Preferred <u>w</u>idth:</Label>
            <Spinner>
              <SpinInput id="pw" defaultValue={'3.7"'} />
              <SpinButtons>
                <SpinButton type="button" aria-label="Increase"><Svg w={5} h={3}><path d="M0 3h5L2.500 0z" fill="#000" /></Svg></SpinButton>
                <SpinButton type="button" aria-label="Decrease"><Caret c="#000" /></SpinButton>
              </SpinButtons>
            </Spinner>
            <Label $second htmlFor="mi">M<u>e</u>asure in:</Label><ComboBox id="mi" value="Inches" />
          </Row>
          <Row $h={24}><Label htmlFor="mar"><u>M</u>argin:</Label><ComboBox id="mar" value="Right" /></Row>
          <CheckField id="lines"><u>S</u>how lines connecting to text</CheckField>
          <Row $h={24} $wide><Label htmlFor="po"><u>P</u>aper orientation in printing:</Label><ComboBox id="po" value="Preserve" /></Row>
          <Actions>
            <PushButton type="submit" $primary>OK</PushButton>
            <PushButton type="button">Cancel</PushButton>
          </Actions>
        </Form>
      </Dialog>
    </Overlay>
  );
}

export default function App() {
  return (
    <Screen>
      <Global />
      <Header>
        <HeaderArt />
        <TitleBar>
          <QuickAccess>
            <IconButton $w={18} aria-label="Word"><WordLogo s={16} /></IconButton>
            <IconButton $w={41} aria-label="Save"><SaveIcon /></IconButton>
            <IconButton $w={18} aria-label="Undo"><UndoIcon /></IconButton>
            <IconButton $w={12} aria-label="Undo list"><Caret c="#b0b0b0" /></IconButton>
            <IconButton $w={34} aria-label="Redo"><RedoIcon /></IconButton>
            <IconButton $w={14} aria-label="Customize"><CustomizeIcon /></IconButton>
          </QuickAccess>
          <DocTitle>Document1 - Word</DocTitle>
          <WindowButtons>
            <IconButton $w={29} aria-label="Help"><HelpIcon /></IconButton>
            <IconButton $w={29} aria-label="Ribbon display"><RibbonDisplayIcon /></IconButton>
            <IconButton $w={29} aria-label="Minimize"><MinIcon /></IconButton>
            <IconButton $w={29} aria-label="Restore"><RestoreIcon /></IconButton>
            <IconButton $w={30} aria-label="Close"><CloseIcon /></IconButton>
          </WindowButtons>
        </TitleBar>
        <TabBar>
          <Tab href="#file" $file $w={59}>FILE</Tab>
          {TABS.map(([t, w]) => <Tab key={t} href={`#${t}`} $w={w} $active={t === 'REVIEW'}>{t}</Tab>)}
          <Account>
            <IconButton $w={20} aria-label="Account menu"><Caret /></IconButton>
            <Avatar />
          </Account>
        </TabBar>
      </Header>

      <Ribbon>
        <Group $pad={2} $w={211}>
          <GroupBody>
            <BigButton w={63} icon={<SpellingIcon />} lines={['Spelling &', 'Grammar']} />
            <BigButton w={40} icon={<DefineIcon />} lines={['Define']} />
            <BigButton w={58} icon={<ThesaurusIcon />} lines={['Thesaurus']} />
            <BigButton w={43} icon={<WordCountIcon />} lines={['Word', 'Count']} />
          </GroupBody>
          <GroupName>Proofing</GroupName>
        </Group>
        <Group $pad={4} $w={117}>
          <GroupBody>
            <BigButton w={50} icon={<TranslateIcon />} lines={['Translate']} caret />
            <BigButton w={58} icon={<LanguageIcon />} lines={['Language']} caret />
          </GroupBody>
          <GroupName>Language</GroupName>
        </Group>
        <Group $pad={3} $w={266}>
          <GroupBody>
            <BigButton w={60} icon={<NewCommentIcon />} lines={['New', 'Comment']} />
            <BigButton w={40} icon={<DeleteIcon />} lines={['Delete']} caret off />
            <BigButton w={53} icon={<PrevIcon />} lines={['Previous']} off />
            <BigButton w={41} icon={<NextIcon />} lines={['Next']} off />
            <BigButton w={64} icon={<ShowIcon />} lines={['Show', 'Comments']} on />
          </GroupBody>
          <GroupName>Comments</GroupName>
        </Group>
        <Group $pad={4} $w={195}>
          <GroupBody>
            <BigButton w={60} icon={<TrackIcon />} lines={['Track', 'Changes']} caret />
            <SmallColumn $pad={2}>
              <SmallRow>
                <MarkupIcon />
                <MarkupBox>
                  <MarkupSelect aria-label="Display for review" defaultValue="Simple Markup"><option>Simple Markup</option></MarkupSelect>
                  <MarkupCaret><Caret /></MarkupCaret>
                </MarkupBox>
              </SmallRow>
              <SmallRow><ShowMarkupIcon /><SmallButton type="button">Show Markup <Caret /></SmallButton></SmallRow>
              <SmallRow><PaneIcon /><SmallButton type="button">Reviewing Pane <Caret /></SmallButton></SmallRow>
            </SmallColumn>
          </GroupBody>
          <GroupName>Tracking</GroupName>
        </Group>
        <Group $pad={3} $w={167}>
          <GroupBody>
            <BigButton w={44} icon={<AcceptIcon />} lines={['Accept']} caret />
            <BigButton w={41} icon={<RejectIcon />} lines={['Reject']} caret />
            <SmallColumn $pad={4}>
              <SmallRow><StepIcon /><SmallButton type="button">Previous</SmallButton></SmallRow>
              <SmallRow><StepIcon next /><SmallButton type="button">Next</SmallButton></SmallRow>
            </SmallColumn>
          </GroupBody>
          <GroupName>Changes</GroupName>
        </Group>
        <Group $pad={3} $w={63}>
          <GroupBody><BigButton w={57} icon={<CompareIcon />} lines={['Compare']} caret /></GroupBody>
          <GroupName>Compare</GroupName>
        </Group>
        <Group $pad={4} $w={108}>
          <GroupBody>
            <BigButton w={55} icon={<BlockIcon />} lines={['Block', 'Authors']} caret off />
            <BigButton w={45} icon={<RestrictIcon />} lines={['Restrict', 'Editing']} />
          </GroupBody>
          <GroupName>Protect</GroupName>
        </Group>
        <Collapse><IconButton $w={14} $h={14} aria-label="Collapse ribbon"><Chevron up bold /></IconButton></Collapse>
      </Ribbon>

      <Workspace><Page /></Workspace>

      <StatusBar>
        <StatusText>PAGE 1 OF 1</StatusText>
        <StatusText>0 WORDS</StatusText>
        <StatusRight>
          <ViewButton aria-label="Read mode"><ReadIcon /></ViewButton>
          <ViewButton $on aria-label="Print layout"><PrintIcon /></ViewButton>
          <ViewButton aria-label="Web layout"><WebIcon /></ViewButton>
          <IconButton $w={15} aria-label="Zoom out"><MinusIcon /></IconButton>
          <ZoomSlider type="range" aria-label="Zoom" min="0" max="100" defaultValue="58" />
          <IconButton $w={15} aria-label="Zoom in"><PlusIcon /></IconButton>
          <ZoomLevel>160%</ZoomLevel>
        </StatusRight>
      </StatusBar>

      <Taskbar>
        <TaskButton $w={48} aria-label="Start"><StartIcon /></TaskButton>
        <Search><SearchIcon /><SearchInput aria-label="Search" placeholder="Type here to search" /></Search>
        <Apps>
          <TaskButton $w={49} aria-label="File Explorer"><FolderIcon /></TaskButton>
          <TaskButton $w={49} aria-label="VLC"><VlcIcon /></TaskButton>
          <TaskButton $w={50} aria-label="Opera"><OperaIcon /></TaskButton>
          <TaskButton $w={48} $on aria-label="Word"><WordLogo s={21} /></TaskButton>
        </Apps>
        <Tray>
          <TaskButton $w={24} aria-label="Hidden icons"><Svg w={13} h={8}><path d="m.8 7 5.700-5.700L12.200 7" stroke="#fff" strokeWidth="1.400" /></Svg></TaskButton>
          <TaskButton $w={25} aria-label="Battery"><BatteryIcon /></TaskButton>
          <TaskButton $w={24} aria-label="Network"><WifiIcon /></TaskButton>
          <TaskButton $w={24} aria-label="Volume"><SpeakerIcon /></TaskButton>
          <Clock>12:31 PM<br />2/1/2020</Clock>
          <TaskButton $w={42} aria-label="Notifications"><NoticeIcon /></TaskButton>
          <TaskButton $w={7} aria-label="Tray edge" />
          <ShowDesktop />
        </Tray>
      </Taskbar>

      <OptionsDialog />
    </Screen>
  );
}
